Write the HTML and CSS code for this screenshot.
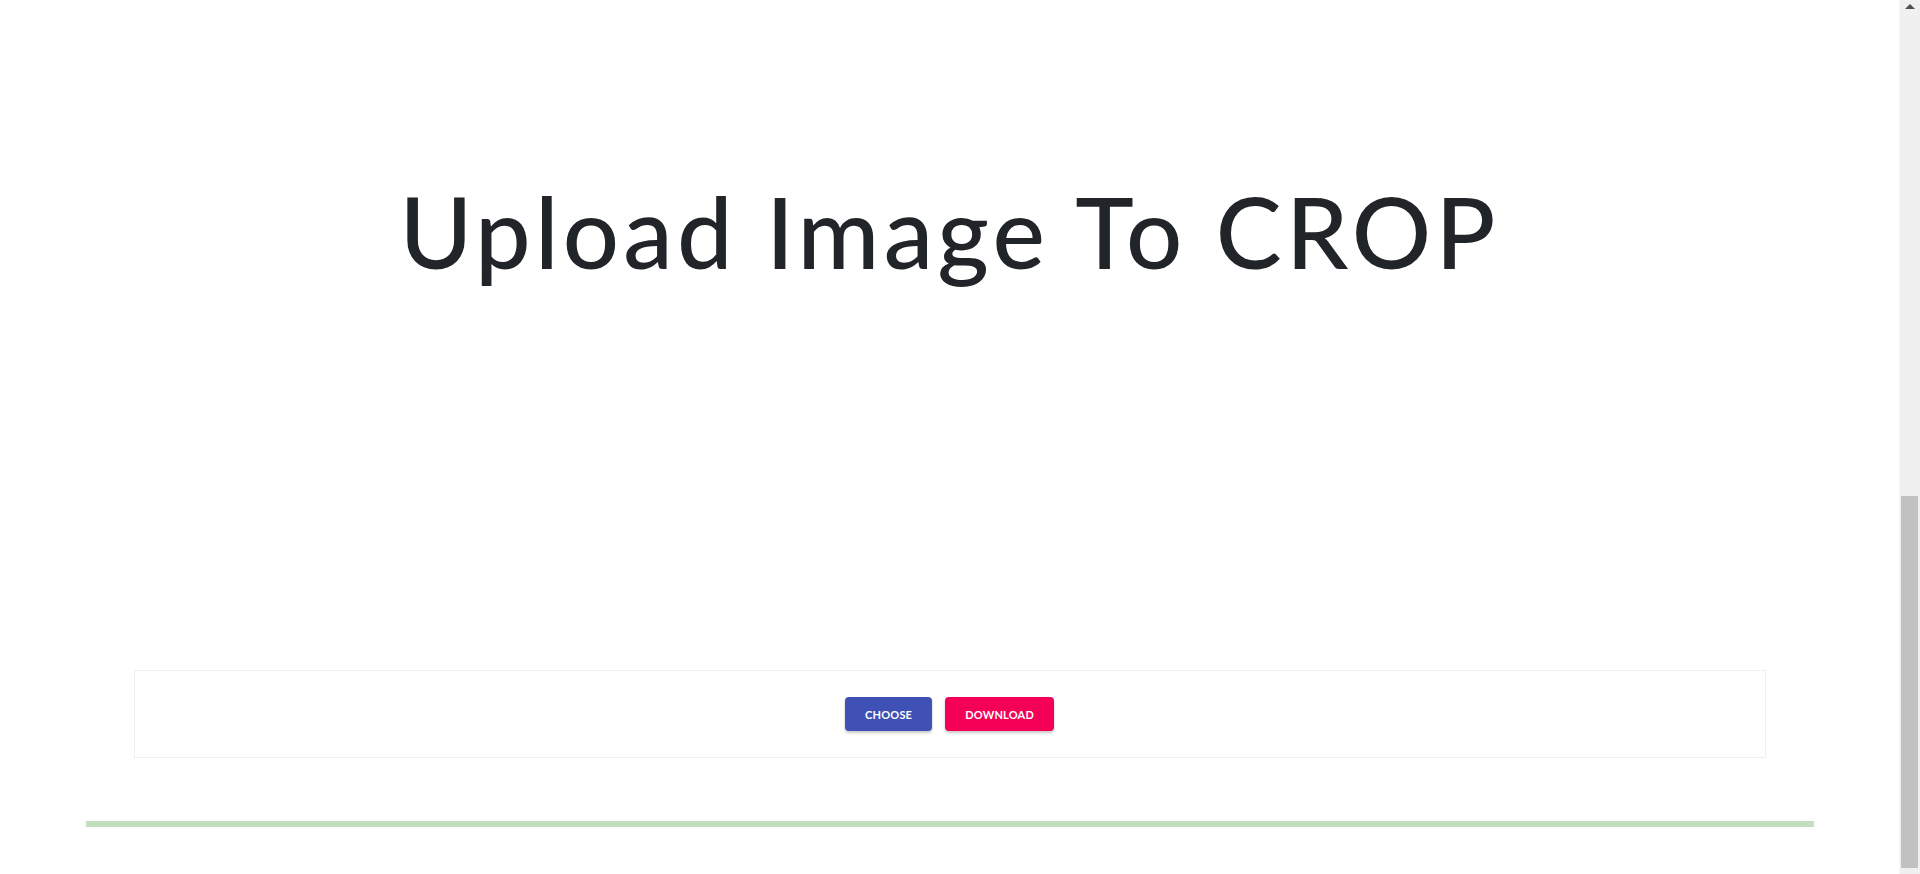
FILE: index.html
```html
<!DOCTYPE html>
<html lang="en">
<head>
<meta charset="utf-8">
<title>Upload Image To CROP</title>
<link rel="stylesheet" href="styles.css">
</head>
<body>
<div class="window">
  <main class="main">
    <div class="page">
      <h1 class="title">Upload Image To CROP</h1>
      <div class="preview"></div>
      <div class="controls">
        <button class="btn btn-choose" type="button">Choose</button>
        <button class="btn btn-download" type="button">Download</button>
      </div>
      <div class="rule"></div>
    </div>
  </main>
  <div class="scrollbar" aria-hidden="true">
    <div class="sb-button"><span class="sb-arrow"></span></div>
    <div class="sb-track">
      <div class="sb-thumb"></div>
    </div>
  </div>
</div>
</body>
</html>
```

FILE: styles.css
```css
html, body {
  margin: 0;
  height: 100%;
  overflow: hidden;
  background: #ffffff;
}
body {
  font-family: Lato, "Open Sans", sans-serif;
  color: #212529;
}
.window {
  display: flex;
  height: 100vh;
}
.main {
  flex: 1;
  min-width: 0;
  background: #ffffff;
}
.page {
  width: 90vw;
  margin: 0 auto;
  padding-top: 171px;
}
.title {
  margin: 0;
  font-size: 99px;
  line-height: 119px;
  font-weight: 500;
  letter-spacing: 4.2px;
  text-align: center;
  color: #212529;
}
.preview {
  height: 380px;
}
.controls {
  margin: 0 48px;
  height: 86px;
  border: 1px solid #efefef;
  display: flex;
  align-items: center;
  justify-content: center;
  gap: 13px;
}
.btn {
  height: 34px;
  padding: 0 20px;
  border: none;
  border-radius: 4px;
  color: #ffffff;
  font-family: Lato, "Open Sans", sans-serif;
  font-size: 11px;
  font-weight: 700;
  letter-spacing: 0.2px;
  text-transform: uppercase;
  box-shadow: 0 2px 3px rgba(0, 0, 0, 0.22);
  cursor: pointer;
}
.btn-choose {
  background: #3f51b5;
}
.btn-download {
  background: #f50057;
}
.rule {
  margin-top: 63px;
  height: 6px;
  background: #c1dfbf;
}

/* window scrollbar, page scrolled to the bottom */
.scrollbar {
  width: 21px;
  flex: none;
  display: flex;
  flex-direction: column;
  background: #f0f0f0;
  border-left: 1px solid #f7f7f7;
  box-sizing: border-box;
}
.sb-button {
  height: 17px;
  display: flex;
  justify-content: center;
  padding-top: 4px;
  box-sizing: border-box;
}
.sb-arrow {
  width: 0;
  height: 0;
  border-left: 5px solid transparent;
  border-right: 5px solid transparent;
  border-bottom: 5px solid #505050;
}
.sb-track {
  flex: 1;
  display: flex;
  flex-direction: column;
  justify-content: flex-end;
  padding: 0 2px 6px 1px;
}
.sb-thumb {
  height: 372px;
  background: #c1c1c1;
}
```
